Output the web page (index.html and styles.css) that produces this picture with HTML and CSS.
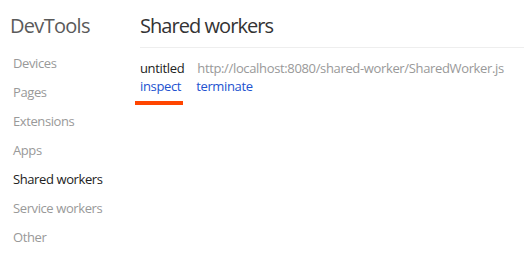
FILE: index.html
```html
<!DOCTYPE html>
<html>
<head>
  <title>Inspect</title>
  <link rel="stylesheet" href="styles.css">
</head>
<body>
  <div class="sidebar">
    <h1>DevTools</h1>
    <div class="nav-item">Devices</div>
    <div class="nav-item">Pages</div>
    <div class="nav-item">Extensions</div>
    <div class="nav-item">Apps</div>
    <div class="nav-item selected">Shared workers</div>
    <div class="nav-item">Service workers</div>
    <div class="nav-item">Other</div>
  </div>
  <div class="content">
    <h2>Shared workers</h2>
    <div class="row">
      <div class="properties">
        <span class="name">untitled</span>
        <span class="url">http://localhost:8080/shared-worker/SharedWorker.js</span>
      </div>
      <div class="actions">
        <span class="action focused">inspect</span>
        <span class="action">terminate</span>
      </div>
    </div>
  </div>
</body>
</html>
```
FILE: styles.css
```css
body {
  margin: 0;
  display: flex;
  background-color: #fff;
  font-family: "Open Sans", "Noto Sans", sans-serif;
}

.sidebar {
  width: 140px;
  flex-shrink: 0;
}

h1 {
  margin: 0;
  padding: 13px 0 0 10px;
  font-size: 20px;
  font-weight: normal;
  color: #5a5a5a;
  line-height: 26px;
  letter-spacing: -0.7px;
}

.nav-item {
  padding-left: 13px;
  font-size: 13px;
  color: #999;
  line-height: 29px;
  letter-spacing: -0.4px;
}

.nav-item:first-of-type {
  margin-top: 10px;
}

.nav-item.selected {
  color: #222;
}

.content {
  flex: 1;
}

h2 {
  margin: 0;
  padding-top: 13px;
  padding-bottom: 8px;
  font-size: 20px;
  font-weight: normal;
  color: #333;
  line-height: 26px;
  letter-spacing: -0.95px;
  border-bottom: 1px solid #eee;
}

.row {
  padding-top: 11px;
  font-size: 13px;
  line-height: 18px;
  letter-spacing: -0.35px;
}

.url {
  color: #999;
  margin-left: 10px;
}

.name {
  color: #222;
}

.action {
  color: #2252d0;
  margin-right: 12px;
}

.focused {
  position: relative;
}

.focused::after {
  content: '';
  position: absolute;
  left: -5px;
  right: -2px;
  bottom: -10px;
  height: 4px;
  background-color: #ff4500;
}
```
